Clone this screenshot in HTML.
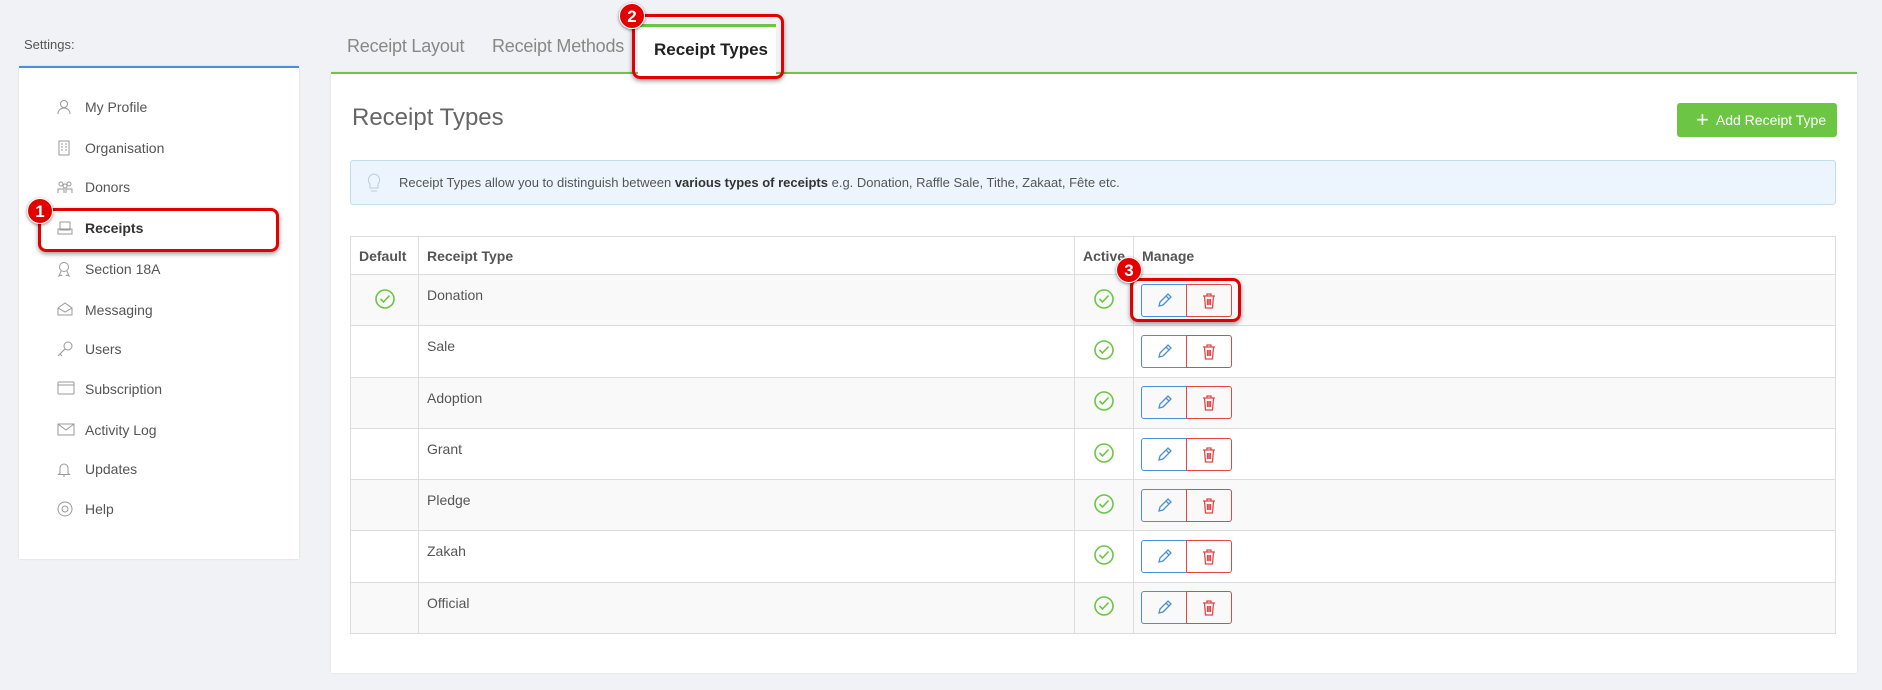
<!DOCTYPE html>
<html><head><meta charset="utf-8"><style>
*{box-sizing:border-box;margin:0;padding:0}
body{width:1882px;height:690px;background:#f1f2f6;font-family:"Liberation Sans",sans-serif;color:#555;position:relative;overflow:hidden;font-size:14px}
.a{position:absolute}
.side{left:19px;top:66px;width:280px;height:493px;background:#fff;border-top:2px solid #4a90d9;box-shadow:0 0 2px rgba(0,0,0,.12)}
.mi{position:absolute;left:65px;height:20px;line-height:20px;font-size:14px;color:#555}
.mi svg{position:absolute;left:-8px;top:2px}
.mi span{position:absolute;left:20px;white-space:nowrap}
.tab{top:36px;font-size:18px;color:#888;letter-spacing:-.2px}
.panel{left:331px;top:72px;width:1526px;height:601px;background:#fff;border-top:2px solid #6cc644;box-shadow:0 0 2px rgba(0,0,0,.1)}
.badge{width:26px;height:26px;border-radius:50%;background:#e30000;color:#fff;font-weight:bold;font-size:17px;text-align:center;line-height:26px;border:1px solid #fff;box-shadow:0 1px 3px rgba(0,0,0,.5)}
.hl{border:3px solid #e30000;border-radius:8px;box-shadow:0 2px 5px rgba(0,0,0,.4)}
table{position:absolute;left:350px;top:236px;width:1486px;border-collapse:collapse;font-size:14px}
td,th{border:1px solid #ddd;text-align:left;vertical-align:top;padding:0 8px}
th{height:38px;vertical-align:middle;color:#555;font-size:14px}
td{height:51.3px;padding-top:12px}
tr.o td{background:#f9f9f9}
.ck{text-align:center;vertical-align:middle;padding:0}
.bt{display:inline-block;width:46px;height:33px;border:1px solid #4a90d9;border-radius:3px 0 0 3px;vertical-align:middle;text-align:center;padding-top:8px}
.bd{border-color:#e04848;border-radius:0 3px 3px 0;margin-left:-1px}
</style></head><body>
<div class="a" style="left:24px;top:37px;font-size:13px;color:#555">Settings:</div>
<div class="a side"></div>
<svg width="0" height="0" style="position:absolute"></svg>
<div class="mi" style="top:97px"><svg width="14" height="16" viewBox="0 0 14 16" fill="none" stroke="#999"><circle cx="7" cy="5" r="3.5"/><path d="M1 15c0-4 3-6 6-6s6 2 6 6"/></svg><span>My Profile</span></div>
<div class="mi" style="top:138px"><svg width="14" height="16" fill="none" stroke="#999"><rect x="2" y="1" width="10" height="14"/><path d="M4 4h2M8 4h2M4 7h2M8 7h2M4 10h2M8 10h2"/></svg><span>Organisation</span></div>
<div class="mi" style="top:177px"><svg width="16" height="16" fill="none" stroke="#999"><circle cx="4" cy="5" r="2"/><circle cx="12" cy="5" r="2"/><circle cx="8" cy="7" r="2"/><path d="M1 14v-4h6v4M9 14v-4h6v4"/></svg><span>Donors</span></div>
<div class="mi" style="top:218px"><svg width="16" height="16" fill="none" stroke="#999"><rect x="3" y="2" width="10" height="8"/><rect x="1" y="9" width="14" height="5"/></svg><span style="color:#333;font-weight:bold">Receipts</span></div>
<div class="mi" style="top:259px"><svg width="14" height="16" fill="none" stroke="#999"><circle cx="7" cy="6" r="4.5"/><path d="M4 10l-2 5 2-1 1 1M10 10l2 5-2-1-1 1"/></svg><span>Section 18A</span></div>
<div class="mi" style="top:300px"><svg width="16" height="14" fill="none" stroke="#999"><path d="M1 6l7-5 7 5v7H1z M1 6l7 4 7-4"/></svg><span>Messaging</span></div>
<div class="mi" style="top:339px"><svg width="16" height="16" fill="none" stroke="#999"><circle cx="11" cy="5" r="4"/><path d="M8 8l-7 7M3 13l2 2"/></svg><span>Users</span></div>
<div class="mi" style="top:379px"><svg width="18" height="14" fill="none" stroke="#999"><rect x="1" y="1" width="16" height="12" rx="1"/><path d="M1 4h16"/></svg><span>Subscription</span></div>
<div class="mi" style="top:420px"><svg width="18" height="14" fill="none" stroke="#999"><rect x="1" y="2" width="16" height="11"/><path d="M1 2l8 6 8-6"/></svg><span>Activity Log</span></div>
<div class="mi" style="top:459px"><svg width="14" height="16" fill="none" stroke="#999"><path d="M3 12V7a4 4 0 018 0v5l1.5 1.5h-11zM6 15h2"/></svg><span>Updates</span></div>
<div class="mi" style="top:499px"><svg width="16" height="16" fill="none" stroke="#999"><circle cx="8" cy="8" r="7"/><circle cx="8" cy="8" r="3"/></svg><span>Help</span></div>
<div class="a hl" style="left:38px;top:208px;width:241px;height:44px"></div>
<div class="a badge" style="left:27px;top:198px">1</div>

<div class="a tab" style="left:347px">Receipt Layout</div>
<div class="a tab" style="left:492px">Receipt Methods</div>
<div class="a panel"></div>
<div class="a" style="left:638px;top:24px;width:138px;height:50px;background:#fff;border-top:3px solid #6cc644"></div>
<div class="a" style="left:654px;top:40px;font-size:17px;font-weight:bold;color:#222">Receipt Types</div>
<div class="a hl" style="left:632px;top:14px;width:152px;height:65px"></div>
<div class="a badge" style="left:619px;top:3px">2</div>

<div class="a" style="left:352px;top:104px;font-size:24px;color:#666">Receipt Types</div>
<div class="a" style="left:1677px;top:103px;width:160px;height:34px;background:#6cc644;border-radius:3px;color:#fff;font-size:14px;line-height:34px;padding-left:19px"><span style="font-size:22px;vertical-align:-2px;font-weight:300">+</span>&nbsp; Add Receipt Type</div>
<div class="a" style="left:350px;top:160px;width:1486px;height:45px;background:#ecf5fd;border:1px solid #c3dcef;border-radius:3px;font-size:13px;line-height:43px;padding-left:48px;color:#555"><svg class="a" style="left:16px;top:12px" width="14" height="20" fill="none" stroke="#bcd"><path d="M7 1a6 6 0 00-4 10v4h8v-4a6 6 0 00-4-10zM4 18h6"/></svg>Receipt Types allow you to distinguish between <b style="color:#333">various types of receipts</b> e.g. Donation, Raffle Sale, Tithe, Zakaat, Fête etc.</div>

<table>
<tr><th style="width:68px">Default</th><th style="width:656px">Receipt Type</th><th style="width:59px">Active</th><th>Manage</th></tr>
<tr class="o"><td class="ck">CK</td><td>Donation</td><td class="ck">CK</td><td class="m">BT</td></tr>
<tr><td></td><td>Sale</td><td class="ck">CK</td><td class="m">BT</td></tr>
<tr class="o"><td></td><td>Adoption</td><td class="ck">CK</td><td class="m">BT</td></tr>
<tr><td></td><td>Grant</td><td class="ck">CK</td><td class="m">BT</td></tr>
<tr class="o"><td></td><td>Pledge</td><td class="ck">CK</td><td class="m">BT</td></tr>
<tr><td></td><td>Zakah</td><td class="ck">CK</td><td class="m">BT</td></tr>
<tr class="o"><td></td><td>Official</td><td class="ck">CK</td><td class="m">BT</td></tr>
</table>
<div class="a hl" style="left:1130px;top:278px;width:111px;height:44px"></div>
<div class="a badge" style="left:1116px;top:257px">3</div>
<script>
var ck='<svg width="22" height="22" viewBox="0 0 22 22" fill="none" stroke="#6cc644" stroke-width="1.6"><circle cx="11" cy="11" r="9"/><path d="M6.5 11l3 3 6-6.5"/></svg>';
var bt='<span class="bt"><svg width="16" height="16" fill="none" stroke="#4a90d9" stroke-width="1.3"><path d="M3 13l1-4 8-8 3 3-8 8zM10 3l3 3"/></svg></span><span class="bt bd"><svg width="14" height="16" fill="none" stroke="#e04848" stroke-width="1.3"><path d="M1 3h12M5 3V1h4v2M2.5 3l1 12h7l1-12M5.5 6v6M7 6v6M8.5 6v6"/></svg></span>';
document.querySelectorAll('td.ck').forEach(function(t){if(t.textContent=='CK')t.innerHTML=ck});
document.querySelectorAll('td.m').forEach(function(t){t.innerHTML=bt;t.style.paddingTop='0';t.style.verticalAlign='middle';t.style.paddingLeft='7px'});
</script>
</body></html>
